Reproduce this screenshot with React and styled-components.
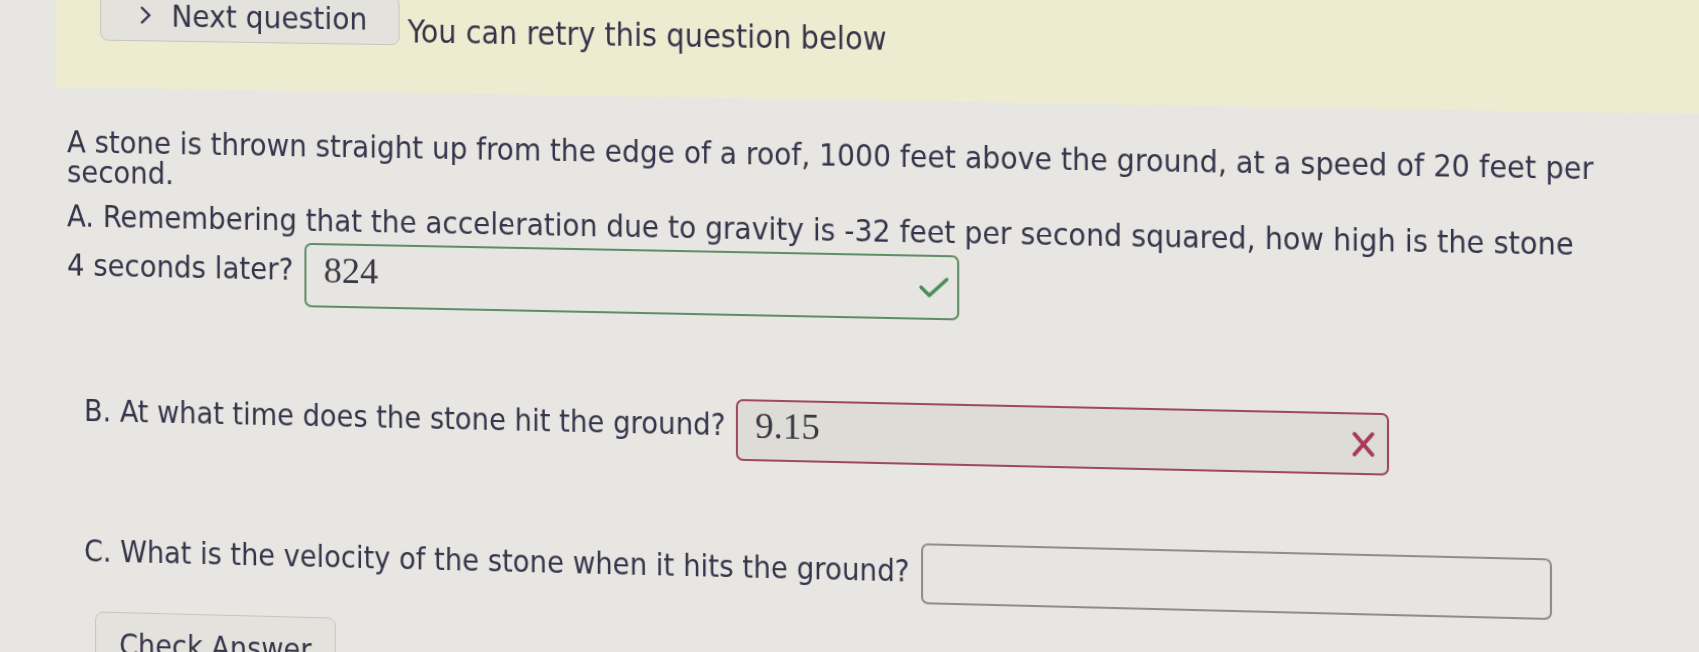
import React from "react";
import styled, { createGlobalStyle } from "styled-components";

const GlobalStyle = createGlobalStyle`
  html, body {
    margin: 0;
    height: 100%;
    overflow: hidden;
    background: #e7e6e2;
  }
  body {
    font-family: "DejaVu Sans Condensed", "DejaVu Sans", sans-serif;
    font-stretch: condensed;
    color: #36344a;
  }
`;

// the whole sheet leans a little, and its right side sits nearer
const Page = styled.div`
  transform: perspective(2000px) rotateY(-2deg) skewY(0.82deg);
  transform-origin: 0 0;
`;

const Banner = styled.div`
  margin: -40px 0 0 56px;
  height: 126px;
  padding-top: 40px;
  box-sizing: border-box;
  background: #eeecd0;
  display: flex;
  align-items: flex-start;
`;

const NavButton = styled.button`
  margin: -10px 0 0 44px;
  width: 297px;
  height: 49px;
  padding: 0 0 9px 38px;
  display: flex;
  align-items: flex-end;
  gap: 20px;
  background: #e3e2dc;
  border: 1.5px solid #c6c4be;
  border-radius: 8px;
  font: inherit;
  font-stretch: condensed;
  font-size: 31px;
  line-height: 31px;
  color: #36344a;
  box-sizing: border-box;
`;

const Chevron = styled.svg`
  width: 12px;
  height: 20px;
  margin-bottom: 6px;
`;

const Notice = styled.div`
  margin: 9px 0 0 8px;
  font-size: 31.4px;
  line-height: 32px;
`;

const Question = styled.div`
  padding: 40px 0 0 67px;
  font-size: 30.5px;
  line-height: 30px;
  white-space: nowrap;
`;

const Stem = styled.p`
  margin: 0;
`;

const Part = styled.div`
  margin: ${(p) => p.$gap}px 0 0 ${(p) => p.$indent}px;
`;

const Row = styled.div`
  display: flex;
  align-items: center;
  margin: ${(p) => p.$gap}px 0 0 ${(p) => p.$indent || 0}px;
  font-size: ${(p) => p.$size || 30.5}px;
`;

const Label = styled.span`
  padding-bottom: ${(p) => p.$lift || 10}px;
`;

const borders = {
  correct: "#5f8d66",
  wrong: "#9c4a60",
  empty: "#8f8e8e",
};

const AnswerBox = styled.div`
  margin-left: ${(p) => p.$offset}px;
  width: ${(p) => p.$w}px;
  height: ${(p) => p.$h}px;
  box-sizing: border-box;
  border: 2px solid ${(p) => borders[p.$status]};
  border-radius: 7px;
  background: ${(p) => (p.$status === "wrong" ? "#dddcd7" : "#e6e5e1")};
  display: flex;
  align-items: center;
  justify-content: space-between;
  padding: 0 5px 0 17px;
  font-family: "Liberation Serif", "Times New Roman", serif;
  font-size: 36px;
  color: #3a3844;
`;

const Value = styled.span`
  margin-bottom: 10px;
`;

const Mark = styled.svg`
  width: 34px;
  height: 26px;
  flex: none;
`;

const CheckButton = styled.button`
  margin: 28px 0 0 95px;
  width: 239px;
  height: 60px;
  padding: 6px 0 0 0;
  display: block;
  text-align: center;
  background: #e3e2dc;
  border: 1.5px solid #c6c4be;
  border-radius: 8px;
  font: inherit;
  font-stretch: condensed;
  font-size: 30px;
  line-height: 30px;
  color: #36344a;
  box-sizing: border-box;
`;

const Tick = () => (
  <Mark viewBox="0 0 34 26">
    <path d="M4 13 L12 21 L29 5" fill="none" stroke="#4b8b5b" strokeWidth="3.4" strokeLinecap="round" strokeLinejoin="round" />
  </Mark>
);

const Cross = () => (
  <Mark viewBox="0 0 34 26">
    <path d="M8 3 L25 23 M25 3 L8 23" fill="none" stroke="#a93a56" strokeWidth="3.8" strokeLinecap="round" />
  </Mark>
);

export default function App() {
  return (
    <>
      <GlobalStyle />
      <Page>
        <Banner>
          <NavButton>
            <Chevron viewBox="0 0 12 20">
              <path d="M2 2 L10 10 L2 18" fill="none" stroke="#36344a" strokeWidth="2.4" />
            </Chevron>
            Next question
          </NavButton>
          <Notice>You can retry this question below</Notice>
        </Banner>

        <Question>
          <Stem>
            A stone is thrown straight up from the edge of a roof, 1000 feet above the ground, at a speed of 20 feet per
            <br />
            second.
          </Stem>

          <Part $gap={14} $indent={0}>
            A. Remembering that the acceleration due to gravity is -32 feet per second squared, how high is the stone
          </Part>
          <Row $gap={7}>
            <Label>4 seconds later?</Label>
            <AnswerBox $status="correct" $offset={11} $w={641} $h={64}>
              <Value>824</Value>
              <Tick />
            </AnswerBox>
          </Row>

          <Row $gap={82} $indent={17} $size={30}>
            <Label>B. At what time does the stone hit the ground?</Label>
            <AnswerBox $status="wrong" $offset={10} $w={630} $h={61}>
              <Value>9.15</Value>
              <Cross />
            </AnswerBox>
          </Row>

          <Row $gap={77} $indent={17} $size={30}>
            <Label $lift={4}>C. What is the velocity of the stone when it hits the ground?</Label>
            <AnswerBox $status="empty" $offset={11} $w={605} $h={60} />
          </Row>
        </Question>

        <CheckButton>Check Answer</CheckButton>
      </Page>
    </>
  );
}
